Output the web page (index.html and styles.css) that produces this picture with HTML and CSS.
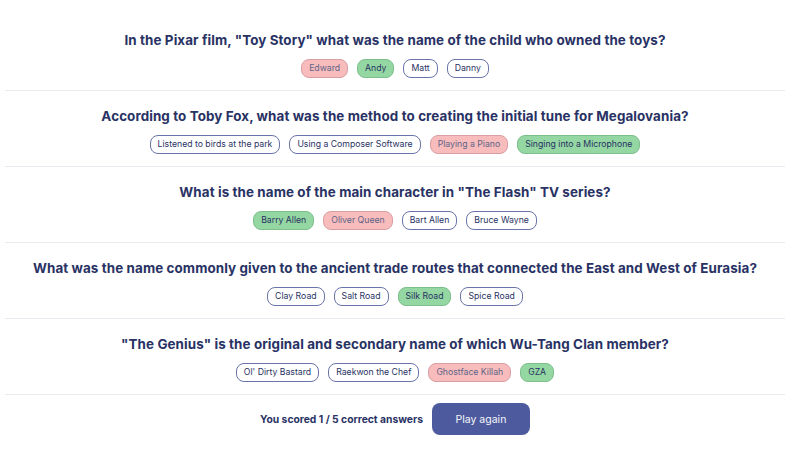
FILE: index.html
```html
<!DOCTYPE html>
<html lang="en">
<head>
  <meta charset="UTF-8">
  <meta name="viewport" content="width=device-width, initial-scale=1.0">
  <title>Quizzical</title>
  <link rel="stylesheet" href="styles.css">
</head>
<body>
  <main class="quiz">
    <section class="question">
      <h2>In the Pixar film, "Toy Story" what was the name of the child who owned the toys?</h2>
      <div class="answers">
        <span class="answer wrong">Edward</span>
        <span class="answer correct">Andy</span>
        <span class="answer">Matt</span>
        <span class="answer">Danny</span>
      </div>
    </section>
    <section class="question">
      <h2>According to Toby Fox, what was the method to creating the initial tune for Megalovania?</h2>
      <div class="answers">
        <span class="answer">Listened to birds at the park</span>
        <span class="answer">Using a Composer Software</span>
        <span class="answer wrong">Playing a Piano</span>
        <span class="answer correct">Singing into a Microphone</span>
      </div>
    </section>
    <section class="question">
      <h2>What is the name of the main character in "The Flash" TV series?</h2>
      <div class="answers">
        <span class="answer correct">Barry Allen</span>
        <span class="answer wrong">Oliver Queen</span>
        <span class="answer">Bart Allen</span>
        <span class="answer">Bruce Wayne</span>
      </div>
    </section>
    <section class="question">
      <h2>What was the name commonly given to the ancient trade routes that connected the East and West of Eurasia?</h2>
      <div class="answers">
        <span class="answer">Clay Road</span>
        <span class="answer">Salt Road</span>
        <span class="answer correct">Silk Road</span>
        <span class="answer">Spice Road</span>
      </div>
    </section>
    <section class="question">
      <h2>"The Genius" is the original and secondary name of which Wu-Tang Clan member?</h2>
      <div class="answers">
        <span class="answer">Ol' Dirty Bastard</span>
        <span class="answer">Raekwon the Chef</span>
        <span class="answer wrong">Ghostface Killah</span>
        <span class="answer correct">GZA</span>
      </div>
    </section>

    <div class="result">
      <span class="score">You scored 1 / 5 correct answers</span>
      <button class="play-again">Play again</button>
    </div>
  </main>
</body>
</html>
```

FILE: styles.css
```css
body {
  margin: 0;
  padding: 15px 5px 0;
  font-family: Inter, "Liberation Sans", sans-serif;
  color: #293264;
  background: #ffffff;
}
.quiz {
  width: 780px;
}
.question {
  padding: 16px 0 12px;
  border-bottom: 1px solid #e8e9ef;
  text-align: center;
}
.question h2 {
  margin: 0 0 10px;
  font-size: 13.4px;
  line-height: 18px;
  font-weight: 700;
  letter-spacing: 0.1px;
}
.answers {
  display: flex;
  justify-content: center;
  gap: 9px;
}
.answer {
  height: 19px;
  box-sizing: border-box;
  padding: 0 7px;
  border: 1px solid #6a74a8;
  border-radius: 8px;
  font-size: 8.7px;
  line-height: 17px;
  color: #293264;
}
.answer.correct {
  background: #94d7a2;
  border-color: #7dbf8c;
}
.answer.wrong {
  background: #f8bcbc;
  border-color: #d99ea4;
  color: #5f6488;
}
.result {
  display: flex;
  justify-content: center;
  align-items: center;
  gap: 9px;
  padding-top: 8px;
}
.score {
  font-size: 10.3px;
  font-weight: 700;
}
.play-again {
  width: 98px;
  height: 32px;
  border: none;
  border-radius: 8px;
  background: #4d5b9e;
  color: #f5f7fb;
  font-family: inherit;
  font-size: 10.5px;
  cursor: pointer;
}
```
